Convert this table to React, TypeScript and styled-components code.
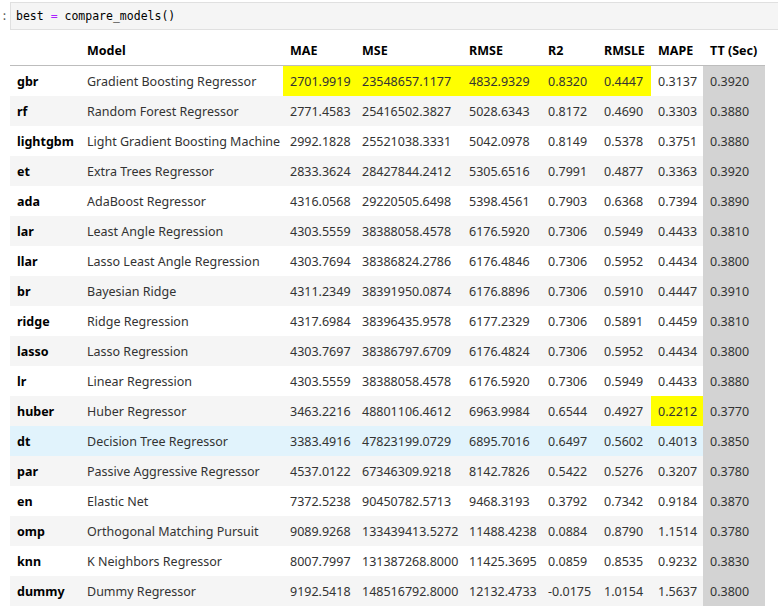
import React from "react";
import styled, { createGlobalStyle } from "styled-components";

const Global = createGlobalStyle`
  html, body { margin: 0; padding: 0; background: #fff; }
  body { font-family: "Segoe UI", "Noto Sans", "Open Sans", sans-serif; overflow: hidden; }
`;

const Page = styled.div`
  width: 778px;
  height: 614px;
  overflow: hidden;
  display: flex;
  flex-direction: column;
`;

const CodeRow = styled.div`
  display: flex;
  align-items: stretch;
  margin-top: 2px;
`;

const Prompt = styled.div`
  width: 10px;
  flex: none;
  font-family: "DejaVu Sans Mono", monospace;
  font-size: 11.5px;
  color: #616161;
  text-align: left;
  padding-left: 1px;
  box-sizing: border-box;
  line-height: 28px;
  white-space: nowrap;
  overflow: hidden;
`;

const CodeBox = styled.div`
  flex: 1;
  margin-right: -10px;
  height: 28px;
  box-sizing: border-box;
  background: #f5f5f5;
  border: 1px solid #e0e0e0;
  padding-left: 5px;
  font-family: "DejaVu Sans Mono", monospace;
  font-size: 11.5px;
  line-height: 26px;
  color: #000;
  white-space: pre;
`;

const Op = styled.span`
  color: #aa22ff;
`;

const Table = styled.table`
  margin: 6px 0 0 10px;
  border-collapse: collapse;
  table-layout: fixed;
  width: 755px;
  font-size: 12.5px;
  color: #333;
`;

const HeadCell = styled.th`
  height: 29px;
  padding: 0 0 0 7px;
  text-align: left;
  font-weight: bold;
  color: #000;
  border-bottom: 1px solid #bdbdbd;
  white-space: nowrap;
`;

const Row = styled.tr<{ $bg: string }>`
  background: ${(p) => p.$bg};
`;

const IndexCell = styled.th`
  height: 30px;
  padding: 0 0 0 7px;
  text-align: left;
  font-weight: bold;
  color: #000;
  white-space: nowrap;
`;

const Cell = styled.td<{ $hl?: "yellow" | "grey" }>`
  height: 30px;
  padding: 0 0 0 7px;
  text-align: left;
  white-space: nowrap;
  overflow: hidden;
  background: ${(p) =>
    p.$hl === "yellow" ? "#ffff00" : p.$hl === "grey" ? "#d3d3d3" : "transparent"};
`;

const widths = [70, 203, 72, 107, 79, 56, 54, 52, 62];
const headers = ["", "Model", "MAE", "MSE", "RMSE", "R2", "RMSLE", "MAPE", "TT (Sec)"];

type R = [string, string, string, string, string, string, string, string, string];

const rows: R[] = [
  ["gbr", "Gradient Boosting Regressor", "2701.9919", "23548657.1177", "4832.9329", "0.8320", "0.4447", "0.3137", "0.3920"],
  ["rf", "Random Forest Regressor", "2771.4583", "25416502.3827", "5028.6343", "0.8172", "0.4690", "0.3303", "0.3880"],
  ["lightgbm", "Light Gradient Boosting Machine", "2992.1828", "25521038.3331", "5042.0978", "0.8149", "0.5378", "0.3751", "0.3880"],
  ["et", "Extra Trees Regressor", "2833.3624", "28427844.2412", "5305.6516", "0.7991", "0.4877", "0.3363", "0.3920"],
  ["ada", "AdaBoost Regressor", "4316.0568", "29220505.6498", "5398.4561", "0.7903", "0.6368", "0.7394", "0.3890"],
  ["lar", "Least Angle Regression", "4303.5559", "38388058.4578", "6176.5920", "0.7306", "0.5949", "0.4433", "0.3810"],
  ["llar", "Lasso Least Angle Regression", "4303.7694", "38386824.2786", "6176.4846", "0.7306", "0.5952", "0.4434", "0.3800"],
  ["br", "Bayesian Ridge", "4311.2349", "38391950.0874", "6176.8896", "0.7306", "0.5910", "0.4447", "0.3910"],
  ["ridge", "Ridge Regression", "4317.6984", "38396435.9578", "6177.2329", "0.7306", "0.5891", "0.4459", "0.3810"],
  ["lasso", "Lasso Regression", "4303.7697", "38386797.6709", "6176.4824", "0.7306", "0.5952", "0.4434", "0.3800"],
  ["lr", "Linear Regression", "4303.5559", "38388058.4578", "6176.5920", "0.7306", "0.5949", "0.4433", "0.3880"],
  ["huber", "Huber Regressor", "3463.2216", "48801106.4612", "6963.9984", "0.6544", "0.4927", "0.2212", "0.3770"],
  ["dt", "Decision Tree Regressor", "3383.4916", "47823199.0729", "6895.7016", "0.6497", "0.5602", "0.4013", "0.3850"],
  ["par", "Passive Aggressive Regressor", "4537.0122", "67346309.9218", "8142.7826", "0.5422", "0.5276", "0.3207", "0.3780"],
  ["en", "Elastic Net", "7372.5238", "90450782.5713", "9468.3193", "0.3792", "0.7342", "0.9184", "0.3870"],
  ["omp", "Orthogonal Matching Pursuit", "9089.9268", "133439413.5272", "11488.4238", "0.0884", "0.8790", "1.1514", "0.3780"],
  ["knn", "K Neighbors Regressor", "8007.7997", "131387268.8000", "11425.3695", "0.0859", "0.8535", "0.9232", "0.3830"],
  ["dummy", "Dummy Regressor", "9192.5418", "148516792.8000", "12132.4733", "-0.0175", "1.0154", "1.5637", "0.3800"],
];

const highlights: Record<string, number[]> = {
  gbr: [2, 3, 4, 5, 6],
  huber: [7],
};

const rowBg = (i: number, key: string) =>
  key === "dt" ? "#e1f3fc" : i % 2 === 1 ? "#f5f5f5" : "#ffffff";

export default function App() {
  return (
    <Page>
      <Global />
      <CodeRow>
        <Prompt>:</Prompt>
        <CodeBox>
          best <Op>=</Op> compare_models()
        </CodeBox>
      </CodeRow>
      <Table>
        <colgroup>
          {widths.map((w, i) => (
            <col key={i} style={{ width: w }} />
          ))}
        </colgroup>
        <thead>
          <tr>
            {headers.map((h, i) => (
              <HeadCell key={i}>{h}</HeadCell>
            ))}
          </tr>
        </thead>
        <tbody>
          {rows.map((r, i) => (
            <Row key={r[0]} $bg={rowBg(i, r[0])}>
              <IndexCell>{r[0]}</IndexCell>
              {r.slice(1).map((v, j) => {
                const col = j + 1;
                const hl = highlights[r[0]]?.includes(col)
                  ? "yellow"
                  : col === 8
                  ? "grey"
                  : undefined;
                return (
                  <Cell key={col} $hl={hl}>
                    {v}
                  </Cell>
                );
              })}
            </Row>
          ))}
        </tbody>
      </Table>
    </Page>
  );
}
